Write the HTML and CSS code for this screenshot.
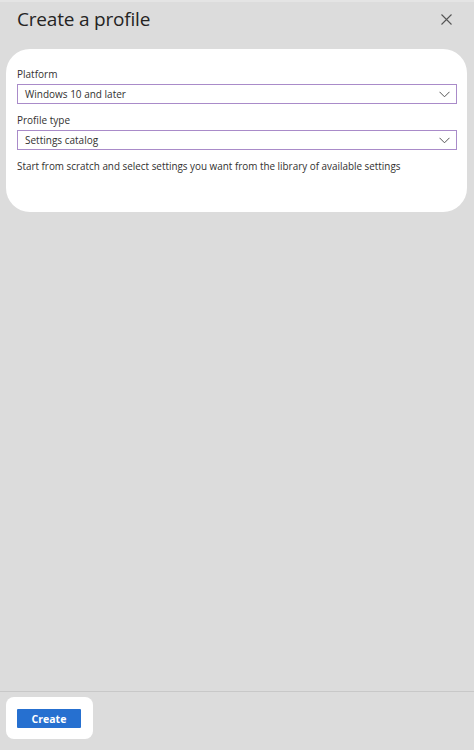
FILE: index.html
```html
<!DOCTYPE html>
<html lang="en">
<head>
<meta charset="utf-8">
<title>Create a profile</title>
<link rel="stylesheet" href="styles.css">
</head>
<body>
<div class="panel">
  <header class="panel-header">
    <h1 class="panel-title">Create a profile</h1>
    <button class="close-btn" aria-label="Close">
      <svg width="11" height="11" viewBox="0 0 11 11"><path d="M0.5 0.5 L10.5 10.5 M10.5 0.5 L0.5 10.5" stroke="#555" stroke-width="1.1" fill="none"/></svg>
    </button>
  </header>
  <main class="panel-body">
    <section class="card">
      <div class="field">
        <label class="field-label">Platform</label>
        <div class="select">
          <span class="select-value">Windows 10 and later</span>
          <svg class="chevron" width="11" height="7" viewBox="0 0 11 7"><path d="M0.5 0.8 L5.5 5.8 L10.5 0.8" stroke="#555" stroke-width="1" fill="none"/></svg>
        </div>
      </div>
      <div class="field">
        <label class="field-label">Profile type</label>
        <div class="select">
          <span class="select-value">Settings catalog</span>
          <svg class="chevron" width="11" height="7" viewBox="0 0 11 7"><path d="M0.5 0.8 L5.5 5.8 L10.5 0.8" stroke="#555" stroke-width="1" fill="none"/></svg>
        </div>
      </div>
      <p class="description">Start from scratch and select settings you want from the library of available settings</p>
    </section>
  </main>
  <footer class="panel-footer">
    <div class="footer-card">
      <button class="primary-btn">Create</button>
    </div>
  </footer>
</div>
</body>
</html>
```
FILE: styles.css
```css
html, body {
  margin: 0;
  padding: 0;
}
body {
  background: #dcdcdc;
  font-family: "Open Sans", "Noto Sans", "Liberation Sans", sans-serif;
  color: #323130;
}
.panel {
  height: 750px;
  display: flex;
  flex-direction: column;
  border-top: 2px solid #e4e4e4;
  box-sizing: border-box;
}
.panel-header {
  display: flex;
  align-items: center;
  justify-content: space-between;
  height: 34px;
  padding: 0 22px 0 17px;
}
.panel-title {
  margin: 0;
  font-size: 19px;
  font-weight: 400;
  color: #252423;
  letter-spacing: -0.2px;
}
.close-btn {
  background: none;
  border: 0;
  padding: 0;
  display: flex;
  cursor: pointer;
}
.panel-body {
  flex: 1;
  padding: 13px 7px 0 6px;
}
.card {
  background: #fff;
  border-radius: 24px;
  height: 163px;
  box-sizing: border-box;
  padding: 18px 10px 0 11px;
}
.field {
  display: flex;
  flex-direction: column;
  margin-bottom: 9px;
}
.field-label {
  font-size: 10px;
  line-height: 14px;
  color: #323130;
  margin-bottom: 3px;
}
.select {
  height: 20px;
  box-sizing: border-box;
  border: 1px solid #a98bc9;
  display: flex;
  align-items: center;
  justify-content: space-between;
  padding: 0 6px 0 7px;
}
.select-value {
  font-size: 10px;
  color: #323130;
}
.chevron {
  display: block;
}
.description {
  margin: 1px 0 0;
  font-size: 9.9px;
  line-height: 14px;
  color: #323130;
}
.panel-footer {
  border-top: 1px solid #c8c8c8;
  padding: 5px 0 11px 6px;
}
.footer-card {
  background: #fff;
  width: 87px;
  height: 42px;
  border-radius: 8px;
  box-sizing: border-box;
  padding: 12px 0 0 11px;
}
.primary-btn {
  width: 64px;
  height: 19px;
  background: #2670d0;
  color: #fff;
  border: 0;
  border-radius: 1px;
  font-family: inherit;
  font-size: 10.5px;
  font-weight: 700;
  padding: 0;
  display: block;
}
```
